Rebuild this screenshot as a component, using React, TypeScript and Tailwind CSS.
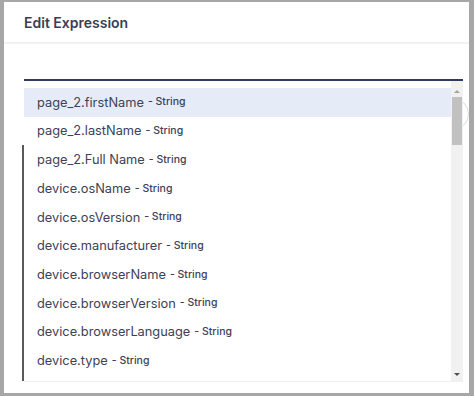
const items = [
  "page_2.firstName",
  "page_2.lastName",
  "page_2.Full Name",
  "device.osName",
  "device.osVersion",
  "device.manufacturer",
  "device.browserName",
  "device.browserVersion",
  "device.browserLanguage",
  "device.type",
];

export default function App() {
  return (
    <div
      className="h-[396px] w-[474px] overflow-hidden border-b-[3px] border-l-4 border-r-[5px] border-t-2 border-[#a7a7a7] bg-white"
      style={{ fontFamily: "Inter, 'Noto Sans', sans-serif" }}
    >
      <div className="flex h-[42px] items-center border-b-2 border-[#f2f2f4] pl-5">
        <h1 className="text-[14px] font-semibold text-[#3a3e55]">Edit Expression</h1>
      </div>

      <div className="relative h-[349px]">
        {/* editor behind the menu */}
        <div className="absolute left-[18px] top-[101px] h-[236px] w-[2px] bg-[#5a5a5a]" />
        <div className="absolute left-[433px] top-[54px] h-[32px] w-[32px] rounded-full border border-[#dcdcdc]" />

        {/* suggestion menu */}
        <div className="absolute left-5 top-[35px] w-[439px] border-t-2 border-[#2f3a5e] bg-white">
          <div className="flex h-[300px] pt-[7px] shadow-[0_1px_0_#f0f0f0]">
            <ul className="flex-1">
              {items.map((name, i) => (
                <li
                  key={name}
                  className={
                    i === 0
                      ? "flex h-[28.7px] items-center bg-[#e5ecf8] pl-[13px] text-[#3d4155]"
                      : "flex h-[28.7px] items-center pl-[13px] text-[#3d4155]"
                  }
                >
                  <span className="text-[12.8px]">{name}</span>
                  <span className="ml-1 text-[10.5px] font-medium">- String</span>
                </li>
              ))}
            </ul>
            <div className="-mt-[7px] flex w-3 flex-col items-center bg-[#f1f1f1] pt-[7px]">
              <div className="mt-[2px] h-0 w-0 border-x-[3px] border-b-[3px] border-x-transparent border-b-[#a3a3a3]" />
              <div className="mt-[4px] h-[48px] w-[10px] bg-[#c1c1c1]" />
              <div className="flex-1" />
              <div className="mb-[5px] h-0 w-0 border-x-[3px] border-t-[3px] border-x-transparent border-t-[#505050]" />
            </div>
          </div>
        </div>
      </div>
    </div>
  );
}
